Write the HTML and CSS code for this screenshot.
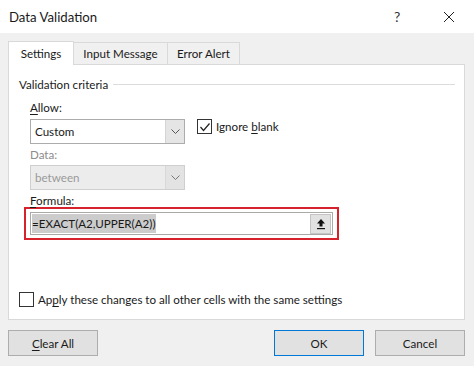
FILE: index.html
```html
<!DOCTYPE html>
<html lang="en">
<head>
  <meta charset="UTF-8" />
  <title>Data Validation</title>
  <link rel="stylesheet" href="styles.css">
</head>
<body>
  <div class="dialog">
    <div class="titlebar">
      <span class="title">Data Validation</span>
      <span class="help">?</span>
      <span class="close">
        <svg width="12" height="12" viewBox="0 0 12 12"><path d="M1 1L11 11M11 1L1 11" stroke="#222" stroke-width="1"/></svg>
      </span>
    </div>

    <div class="content">
      <div class="tabs">
        <div class="tab active">Settings</div>
        <div class="tab">Input Message</div>
        <div class="tab">Error Alert</div>
      </div>

      <div class="panel">
        <div class="group-title">
          <span>Validation criteria</span>
          <div class="rule"></div>
        </div>

        <div class="criteria">
          <div class="label"><u>A</u>llow:</div>
          <div class="row">
            <div class="select">
              <span class="value">Custom</span>
              <span class="arrow">
                <svg width="9" height="5" viewBox="0 0 9 5"><path d="M0.5 0.5L4.5 4.5L8.5 0.5" fill="none" stroke="#555" stroke-width="1"/></svg>
              </span>
            </div>
            <div class="check ignore">
              <span class="box">
                <svg width="12" height="10" viewBox="0 0 12 10"><path d="M1.5 5L4.5 8.5L10.5 1.5" fill="none" stroke="#222" stroke-width="1.2"/></svg>
              </span>
              <span>Ignore <u>b</u>lank</span>
            </div>
          </div>

          <div class="label muted">Data:</div>
          <div class="select disabled">
            <span class="value">between</span>
            <span class="arrow">
              <svg width="9" height="5" viewBox="0 0 9 5"><path d="M0.5 0.5L4.5 4.5L8.5 0.5" fill="none" stroke="#777" stroke-width="1"/></svg>
            </span>
          </div>

          <div class="label formula-label"><u>F</u>ormula:</div>
          <div class="highlight">
            <div class="formula">
              <span class="selected">=EXACT(A2,UPPER(A2))</span>
              <span class="ref-btn">
                <svg width="10" height="12" viewBox="0 0 10 12"><path d="M5 1L1 5.5H3.5V8.5H6.5V5.5H9Z" fill="#111"/><rect x="1" y="10" width="8" height="1.2" fill="#111"/></svg>
              </span>
            </div>
          </div>
        </div>

        <div class="check apply">
          <span class="box"></span>
          <span>Ap<u>p</u>ly these changes to all other cells with the same settings</span>
        </div>
      </div>

      <div class="buttons">
        <button class="btn"><u>C</u>lear All</button>
        <div class="spacer"></div>
        <button class="btn default">OK</button>
        <button class="btn">Cancel</button>
      </div>
    </div>
  </div>
</body>
</html>
```

FILE: styles.css
```css
* {
  box-sizing: border-box;
}

body {
  margin: 0;
  font-family: Lato, "Open Sans", Arial, sans-serif;
  font-size: 11.6px;
  color: #1a1a1a;
  background: #fff;
}

u {
  text-underline-offset: 2px;
}

.dialog {
  width: 474px;
  height: 366px;
  background: #f0f0f0;
  overflow: hidden;
}

.titlebar {
  height: 33px;
  background: #fff;
  display: flex;
  align-items: center;
  padding-left: 9px;
}

.title {
  font-size: 13.2px;
  flex: 1;
}

.help {
  font-size: 14px;
  color: #333;
  width: 49px;
}

.close {
  width: 31px;
  display: flex;
  align-items: center;
}

.content {
  padding: 8px 9px 0 8px;
}

.tabs {
  display: flex;
  align-items: flex-end;
  height: 23px;
}

.tab {
  height: 22px;
  line-height: 21px;
  border: 1px solid #d9d9d9;
  border-bottom: none;
  border-left: none;
  background: #f0f0f0;
  text-align: center;
}

.tab.active {
  width: 66px;
  height: 24px;
  line-height: 24px;
  background: #fff;
  border-left: 1px solid #d9d9d9;
  margin-bottom: -1px;
  position: relative;
}

.tab:nth-child(2) {
  width: 94px;
}

.tab:nth-child(3) {
  width: 72px;
}

.panel {
  height: 256px;
  background: #fff;
  border: 1px solid #d9d9d9;
  padding: 11px 9px 0 10px;
  display: flex;
  flex-direction: column;
}

.group-title {
  display: flex;
  align-items: center;
  gap: 5px;
  height: 17px;
}

.rule {
  flex: 1;
  height: 1px;
  background: #dcdcdc;
}

.criteria {
  padding-left: 11px;
  padding-top: 6px;
}

.label {
  height: 17px;
  line-height: 17px;
  margin-bottom: 3px;
}

.label.muted {
  color: #8c8c8c;
  margin-top: 2px;
  margin-bottom: 2px;
}

.label.formula-label {
  margin-top: 2px;
  margin-bottom: -2px;
}

.row {
  display: flex;
  align-items: flex-start;
}

.select {
  width: 155px;
  height: 25px;
  border: 1px solid #acacac;
  background: #fff;
  display: flex;
  align-items: stretch;
}

.select .value {
  flex: 1;
  line-height: 23px;
  padding-left: 4px;
}

.select .arrow {
  width: 19px;
  background: #e5e5e5;
  border-left: 1px solid #d4d4d4;
  display: flex;
  align-items: center;
  justify-content: center;
}

.select.disabled {
  background: #ececec;
  border-color: #cfcfcf;
  color: #9a9a9a;
}

.select.disabled .arrow {
  background: #e3e3e3;
  border-left-color: #d8d8d8;
}

.check {
  display: flex;
  align-items: center;
  gap: 4px;
}

.ignore {
  margin-left: 12px;
  height: 15px;
}

.box {
  width: 15px;
  height: 15px;
  border: 1px solid #333;
  background: #fff;
  display: flex;
  align-items: center;
  justify-content: center;
}

.highlight {
  width: 315px;
  height: 33px;
  margin-left: -6px;
  border: 2px solid #d7222b;
  display: flex;
  align-items: center;
  justify-content: center;
}

.formula {
  width: 303px;
  height: 23px;
  border: 1px solid #a9a9a9;
  background: #fff;
  display: flex;
  align-items: center;
  padding-left: 1px;
}

.selected {
  background: #cccccc;
  line-height: 19px;
  padding-right: 1px;
  flex: none;
}

.ref-btn {
  margin-left: auto;
  width: 21px;
  height: 20px;
  margin-right: 1px;
  background: #e1e1e1;
  border: 1px solid #c4c4c4;
  display: flex;
  align-items: center;
  justify-content: center;
}

.apply {
  margin-top: auto;
  margin-bottom: 12px;
}

.buttons {
  display: flex;
  margin-top: 10px;
  gap: 11px;
}

.spacer {
  flex: 1;
}

.btn {
  width: 90px;
  height: 26px;
  font: inherit;
  color: #1a1a1a;
  background: #e1e1e1;
  border: 1px solid #adadad;
  padding: 0;
}

.btn.default {
  border: 1px solid #0078d7;
}
```
